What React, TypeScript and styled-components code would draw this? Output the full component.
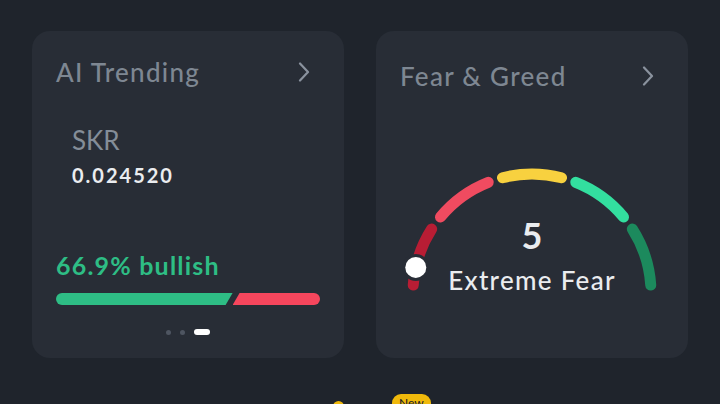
import React from 'react'
import styled, { createGlobalStyle } from 'styled-components'

const GlobalStyle = createGlobalStyle`
  html, body {
    margin: 0;
    padding: 0;
    background: #1f242c;
    font-family: 'Lato', 'Liberation Sans', sans-serif;
    overflow: hidden;
  }
`

const segments = [
  { from: 0, color: '#b81d34' },
  { from: 1, color: '#f04b60' },
  { from: 2, color: '#f8d13f' },
  { from: 3, color: '#33df9f' },
  { from: 4, color: '#1c8a5d' },
]

const CX = 132
const CY = 133
const R = 119
const START = 3.8
const SPAN = 172.4
const GAP = 7.2
const SEG = (SPAN - GAP * 4) / 5

const point = (deg: number) => {
  const a = (deg * Math.PI) / 180
  return [CX - R * Math.cos(a), CY - R * Math.sin(a)]
}

const arc = (a1: number, a2: number) => {
  const [x1, y1] = point(a1)
  const [x2, y2] = point(a2)
  return `M ${x1.toFixed(2)} ${y1.toFixed(2)} A ${R} ${R} 0 0 1 ${x2.toFixed(2)} ${y2.toFixed(2)}`
}

const Chevron = () => (
  <svg width="12" height="20" viewBox="0 0 12 20" fill="none">
    <path d="M2 1.5 L10 10 L2 18.5" stroke="#8a929e" strokeWidth="2.2" strokeLinecap="round" strokeLinejoin="round" />
  </svg>
)

const Gauge = ({ value }: { value: number }) => {
  const [dx, dy] = point(START + (value / 100) * SPAN)
  return (
    <svg width="264" height="140" viewBox="0 0 264 140">
      {segments.map((s) => {
        const a1 = START + s.from * (SEG + GAP)
        return (
          <path key={s.from} d={arc(a1, a1 + SEG)} stroke={s.color} strokeWidth="11" strokeLinecap="round" fill="none" />
        )
      })}
      <circle cx={dx} cy={dy} r="13.5" fill="#282d36" />
      <circle cx={dx} cy={dy} r="10.5" fill="#ffffff" />
    </svg>
  )
}

const App = () => {
  const bullish = 66.9
  return (
    <Page>
      <GlobalStyle />
      <Cards>
        <Card>
          <Header>
            <Title>AI Trending</Title>
            <Chevron />
          </Header>
          <Token>
            <Symbol>SKR</Symbol>
            <Price>0.024520</Price>
          </Token>
          <Sentiment>{bullish}% bullish</Sentiment>
          <Bar>
            <Bull style={{ width: `${bullish}%` }} />
            <Bear />
          </Bar>
          <Dots>
            <Dot />
            <Dot />
            <Dot $active />
          </Dots>
        </Card>
        <Card>
          <Header $shift={4}>
            <Title>Fear &amp; Greed</Title>
            <Chevron />
          </Header>
          <GaugeWrap>
            <Gauge value={5} />
            <Reading>
              <Score>5</Score>
              <Mood>Extreme Fear</Mood>
            </Reading>
          </GaugeWrap>
        </Card>
      </Cards>
      <Shortcuts>
        <Coin />
        <Badge>New</Badge>
      </Shortcuts>
    </Page>
  )
}

export default App

const Page = styled.div`
  height: 404px;
  padding: 31px 32px 0;
  box-sizing: border-box;
  overflow: hidden;
`

const Cards = styled.div`
  display: grid;
  grid-template-columns: 312px 312px;
  gap: 32px;
`

const Card = styled.div`
  height: 327px;
  box-sizing: border-box;
  background: #282d36;
  border-radius: 18px;
  padding: 25px 24px 0;
  display: flex;
  flex-direction: column;
`

const Header = styled.div<{ $shift?: number }>`
  display: flex;
  align-items: center;
  justify-content: space-between;
  height: 32px;
  margin-top: ${(p) => p.$shift || 0}px;
  padding-right: 10px;
`

const Title = styled.div`
  font-size: 26px;
  line-height: 32px;
  font-weight: 500;
  letter-spacing: 1.3px;
  color: #7e8792;
`

const Token = styled.div`
  margin-top: 36px;
  padding-left: 16px;
  display: flex;
  flex-direction: column;
`

const Symbol = styled.div`
  font-size: 26px;
  line-height: 32px;
  color: #848d98;
`

const Price = styled.div`
  margin-top: 7px;
  font-size: 20px;
  line-height: 24px;
  font-weight: 700;
  color: #eaecef;
  letter-spacing: 2px;
`

const Sentiment = styled.div`
  margin-top: 63px;
  font-size: 25px;
  line-height: 30px;
  font-weight: 700;
  letter-spacing: 1.2px;
  color: #2ebd85;
`

const Bar = styled.div`
  margin-top: 13px;
  height: 12px;
  display: flex;
`

const Bull = styled.div`
  background: #2ebd85;
  border-radius: 6px 0 0 6px;
  clip-path: polygon(0 0, 100% 0, calc(100% - 7px) 100%, 0 100%);
`

const Bear = styled.div`
  flex: 1;
  background: #f6465d;
  border-radius: 0 6px 6px 0;
  clip-path: polygon(7px 0, 100% 0, 100% 100%, 0 100%);
`

const Dots = styled.div`
  margin-top: 24px;
  display: flex;
  justify-content: center;
  align-items: center;
  gap: 9px;
  height: 6px;
`

const Dot = styled.div<{ $active?: boolean }>`
  width: ${(p) => (p.$active ? 16 : 5)}px;
  height: ${(p) => (p.$active ? 6 : 5)}px;
  border-radius: 3px;
  background: ${(p) => (p.$active ? '#ffffff' : '#4e5561')};
`

const GaugeWrap = styled.div`
  position: relative;
  margin-top: 68px;
  width: 264px;
  height: 140px;
`

const Reading = styled.div`
  position: absolute;
  left: 0;
  right: 0;
  top: 55px;
  display: flex;
  flex-direction: column;
  align-items: center;
  color: #eaecef;
`

const Score = styled.div`
  font-size: 36px;
  line-height: 40px;
  font-weight: 700;
`

const Mood = styled.div`
  margin-top: 9px;
  font-size: 26px;
  line-height: 32px;
  font-weight: 500;
  letter-spacing: 1.3px;
`

const Shortcuts = styled.div`
  margin-top: 36px;
  display: flex;
  align-items: flex-start;
  padding-left: 301px;
`

const Coin = styled.div`
  margin-top: 7px;
  width: 11px;
  height: 11px;
  border-radius: 50%;
  background: #f0b90b;
`

const Badge = styled.div`
  margin-left: 48px;
  height: 18px;
  padding: 0 7px;
  border-radius: 9px;
  background: #f0b90b;
  color: #1e2329;
  font-size: 12px;
  line-height: 18px;
  font-weight: 500;
`
